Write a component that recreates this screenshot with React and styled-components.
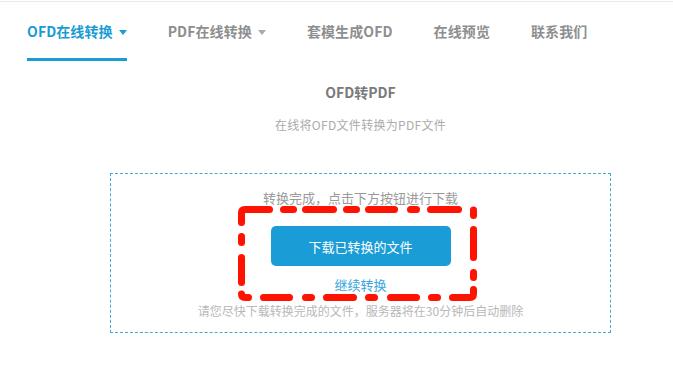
import React from "react";
import styled, { createGlobalStyle } from "styled-components";

const Global = createGlobalStyle`
  html, body { margin: 0; padding: 0; background: #fff; }
  body { font-family: "Noto Sans CJK SC", "Noto Sans", sans-serif; }
  * { box-sizing: border-box; }
`;

const Page = styled.div`
  width: 673px;
  min-height: 371px;
  padding-top: 1px;
  background: #fff;
`;

const TopRule = styled.div`
  height: 1px;
  background: #f1e4ee;
`;

const Nav = styled.nav`
  display: flex;
  gap: 41px;
  padding-left: 27px;
  height: 59px;
`;

const NavItem = styled.div`
  display: flex;
  align-items: center;
  gap: 6px;
  height: 59px;
  padding-top: 2px;
  border-bottom: 3px solid ${(p) => (p.$active ? "#1a9bd4" : "transparent")};
  color: ${(p) => (p.$active ? "#1a9bd4" : "#8e8e8e")};
  font-size: 14px;
  font-weight: 700;
  white-space: nowrap;
  letter-spacing: 0.1px;
`;

const Caret = styled.span`
  width: 0;
  height: 0;
  border-left: 4.5px solid transparent;
  border-right: 4.5px solid transparent;
  border-top: 5px solid currentColor;
  margin-top: 2px;
  opacity: ${(p) => (p.$active ? 1 : 0.75)};
`;

const Main = styled.main`
  width: 501px;
  margin-left: 110px;
  display: flex;
  flex-direction: column;
  align-items: center;
`;

const Title = styled.h1`
  margin: 21px 0 0;
  font-size: 14px;
  line-height: 20px;
  font-weight: 700;
  color: #7a7a7a;
`;

const Subtitle = styled.p`
  margin: 14px 0 0;
  font-size: 12px;
  line-height: 18px;
  color: #ababab;
  letter-spacing: 0.3px;
`;

const DropBox = styled.section`
  position: relative;
  width: 501px;
  margin-top: 39px;
  border: 1px dashed #48a6d1;
  padding: 15px 0 13px;
  display: flex;
  flex-direction: column;
  align-items: center;
`;

const Status = styled.p`
  margin: 0;
  font-size: 13px;
  line-height: 18px;
  color: #9a9a9a;
`;

const DownloadButton = styled.button`
  margin-top: 19px;
  width: 180px;
  height: 40px;
  border: none;
  border-radius: 5px;
  background: #1a9dd6;
  color: #fff;
  font-family: inherit;
  font-size: 13px;
  cursor: pointer;
`;

const ContinueLink = styled.a`
  margin-top: 10px;
  font-size: 13px;
  line-height: 18px;
  color: #3aa6dc;
  text-decoration: none;
`;

const Note = styled.p`
  margin: 9px 0 0;
  font-size: 12px;
  line-height: 16px;
  color: #b8b8b8;
`;

const Annotation = styled.svg`
  position: absolute;
  left: 119px;
  top: 27px;
  width: 260px;
  height: 106px;
  pointer-events: none;
  overflow: visible;
`;

const navItems = [
  { label: "OFD在线转换", caret: true, active: true },
  { label: "PDF在线转换", caret: true },
  { label: "套模生成OFD" },
  { label: "在线预览" },
  { label: "联系我们" },
];

const h = (y, a, b) => `M${a} ${y} L${b} ${y}`;
const v = (x, a, b) => `M${x} ${a} L${x} ${b}`;

const L = 241.5, R = 473.5, T = 208.5, B = 296.5;
const segs = [
  `M${L} 221.5 L${L} 212 Q${L} ${T} 245 ${T} L269.5 ${T}`,
  h(T, 283.5, 293.5), h(T, 305.5, 333.5), h(T, 346.5, 356.5),
  h(T, 368.5, 394.5), h(T, 410.5, 416.5), h(T, 430.5, 458.5),
  v(R, 209, 214.5),
  v(R, 228.5, 256.5), v(R, 271.5, 276.5),
  `M${R} 288.5 L${R} 293 Q${R} ${B} 470 ${B} L452.5 ${B}`,
  h(B, 431.5, 437.5), h(B, 390.5, 416.5), h(B, 368.5, 374.5),
  h(B, 326.5, 353.5), h(B, 305.5, 311.5), h(B, 263.5, 289.5),
  `M${L} 293 Q${L} ${B} 245 ${B} L248.5 ${B}`,
  v(L, 235.5, 241.5), v(L, 256.5, 281.5),
];

export default function App() {
  return (
    <Page>
      <Global />
      <TopRule />
      <Nav>
        {navItems.map((it) => (
          <NavItem key={it.label} $active={it.active}>
            {it.label}
            {it.caret && <Caret $active={it.active} />}
          </NavItem>
        ))}
      </Nav>
      <Main>
        <Title>OFD转PDF</Title>
        <Subtitle>在线将OFD文件转换为PDF文件</Subtitle>
        <DropBox>
          <Status>转换完成，点击下方按钮进行下载</Status>
          <DownloadButton>下载已转换的文件</DownloadButton>
          <ContinueLink href="#">继续转换</ContinueLink>
          <Note>请您尽快下载转换完成的文件，服务器将在30分钟后自动删除</Note>
          <Annotation viewBox="230 200 260 106">
            {segs.map((d, i) => (
              <path
                key={i}
                d={d}
                fill="none"
                stroke="#ff1200"
                strokeWidth="7"
                strokeLinecap="round"
                strokeLinejoin="round"
              />
            ))}
          </Annotation>
        </DropBox>
      </Main>
    </Page>
  );
}
